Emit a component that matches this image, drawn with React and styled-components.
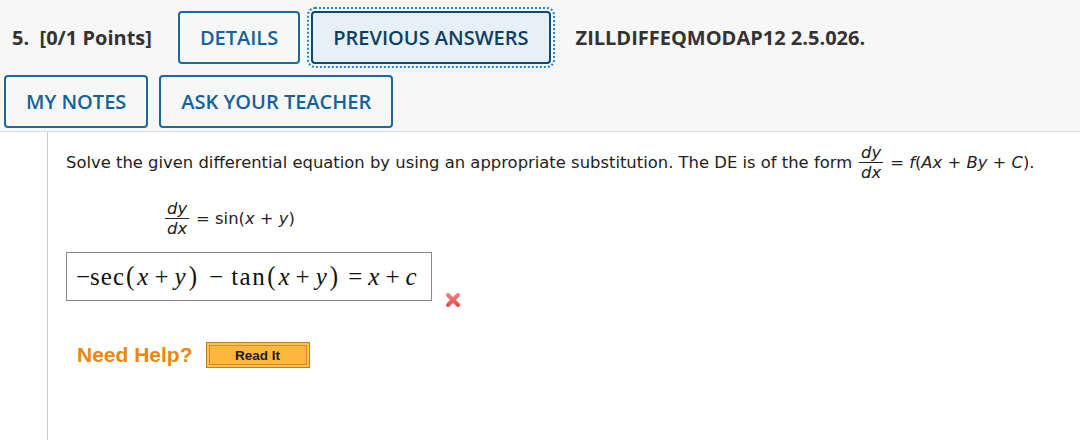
import styled, { createGlobalStyle } from 'styled-components';

const GlobalStyle = createGlobalStyle`
  html, body {
    margin: 0;
    padding: 0;
    background: #ffffff;
  }
  body {
    font-family: "Open Sans", "Liberation Sans", sans-serif;
    color: #333;
  }
`;

const Page = styled.div`
  width: 1080px;
  height: 440px;
  overflow: hidden;
  background: #fff;
`;

// Header | points, buttons, question code
const Header = styled.header`
  background: #f7f7f7;
  border-bottom: 1px solid #dddddd;
  padding: 11px 0 3px;
  display: flex;
  flex-direction: column;
  gap: 11px;
`;

const HeaderRow = styled.div`
  display: flex;
  align-items: center;
  padding-left: ${(p) => p.$indent}px;
  gap: 11px;
`;

const Heading = styled.span`
  font-weight: 700;
  font-size: 20px;
  color: #333;
  margin-right: ${(p) => p.$after || 0}px;
  margin-left: ${(p) => p.$before || 0}px;
`;

const HeadButton = styled.button`
  height: 53px;
  padding: 0 20px;
  border: 2px solid ${(p) => (p.$active ? '#0c4a72' : '#1a6a9c')};
  border-radius: 4px;
  background: ${(p) => (p.$active ? '#e8f0f7' : '#f7f7f7')};
  color: ${(p) => (p.$active ? '#0c3f63' : '#12639a')};
  font-family: "Open Sans", "Liberation Sans", sans-serif;
  font-size: 20px;
  font-weight: 600;
  outline: ${(p) => (p.$active ? '2px dotted #1c86e0' : 'none')};
  outline-offset: 2px;
  cursor: pointer;
`;

// Question body
const Body = styled.section`
  margin-left: 47px;
  border-left: 1px solid #cccccc;
  height: 320px;
  padding: 11px 0 0 18px;
  font-family: "DejaVu Sans", Verdana, sans-serif;
  font-size: 16.4px;
  color: #222;
`;

const Prompt = styled.p`
  margin: 0;
  display: flex;
  align-items: center;
  white-space: nowrap;
`;

const Frac = styled.span`
  display: inline-flex;
  flex-direction: column;
  align-items: center;
  margin: 0 7px 0 7px;
  font-style: italic;
  line-height: 19px;

  span:first-child {
    border-bottom: 1px solid #222;
    padding: 0 2px 0;
  }
`;

const Var = styled.i`
  font-style: italic;
`;

const Equation = styled.div`
  display: flex;
  align-items: center;
  margin: 17px 0 0 92px;
  white-space: nowrap;
`;

const AnswerRow = styled.div`
  display: flex;
  align-items: flex-start;
  gap: 13px;
  margin-top: 14px;
`;

const AnswerBox = styled.div`
  width: 366px;
  height: 49px;
  border: 1px solid #8a8a8a;
  box-sizing: border-box;
  display: flex;
  align-items: center;
  padding: 1px 0 0 9px;
  font-family: "Liberation Serif", "DejaVu Serif", serif;
  font-size: 25px;
  color: #111;
  white-space: nowrap;
`;

const MathVar = styled.span`
  font-style: italic;
`;

const Fn = styled.span`
  letter-spacing: ${(p) => p.$track || 0}px;
`;

const Op = styled.span`
  margin: 0 ${(p) => p.$r ?? 6}px 0 ${(p) => p.$l ?? 6}px;
`;

const Paren = styled.span`
  display: inline-block;
  transform: scaleY(1.08) translateY(-1px);
  margin: 0 ${(p) => (p.$open ? 3 : 2)}px 0 ${(p) => (p.$open ? 1 : 3)}px;
`;

const WrongMark = styled.svg`
  margin-top: 40px;
  flex: none;
`;

const HelpRow = styled.div`
  display: flex;
  align-items: center;
  gap: 13px;
  margin: 34px 0 0 11px;
`;

const HelpLabel = styled.span`
  font-family: "Liberation Sans", Arial, sans-serif;
  font-weight: 700;
  font-size: 21px;
  color: #f0850c;
`;

const ReadIt = styled.button`
  width: 104px;
  height: 26px;
  padding: 0;
  border: 1px solid #c47a1d;
  background: #fdb73a;
  box-shadow: inset 0 0 0 2px #fcc359, inset 0 0 0 3px #d48b28;
  font-family: "Liberation Sans", Arial, sans-serif;
  font-weight: 700;
  font-size: 13.5px;
  color: #1b1b1b;
  cursor: pointer;
`;

const Fraction = ({ top, bottom }) => (
  <Frac>
    <span>{top}</span>
    <span>{bottom}</span>
  </Frac>
);

const App = () => {
  return (
    <Page>
      <GlobalStyle />
      <Header>
        <HeaderRow $indent={12}>
          <Heading $after={15}>5.&nbsp; [0/1 Points]</Heading>
          <HeadButton type="button">DETAILS</HeadButton>
          <HeadButton type="button" $active>
            PREVIOUS ANSWERS
          </HeadButton>
          <Heading $before={14}>ZILLDIFFEQMODAP12 2.5.026.</Heading>
        </HeaderRow>
        <HeaderRow $indent={4}>
          <HeadButton type="button">MY NOTES</HeadButton>
          <HeadButton type="button">ASK YOUR TEACHER</HeadButton>
        </HeaderRow>
      </Header>

      <Body>
        <Prompt>
          Solve the given differential equation by using an appropriate
          substitution. The DE is of the form
          <Fraction top="dy" bottom="dx" />= <Var>&nbsp;f</Var>(<Var>Ax</Var>&nbsp;+&nbsp;
          <Var>By</Var>&nbsp;+&nbsp;<Var>C</Var>).
        </Prompt>

        <Equation>
          <Fraction top="dy" bottom="dx" />= sin(<Var>x</Var>&nbsp;+&nbsp;<Var>y</Var>)
        </Equation>

        <AnswerRow>
          <AnswerBox>
            <span>−</span>
            <Fn $track={1}>sec</Fn>
            <Paren $open>(</Paren>
            <MathVar>x</MathVar>
            <Op>+</Op>
            <MathVar>y</MathVar>
            <Paren>)</Paren>
            <Op $l={10} $r={8}>−</Op>
            <Fn $track={1.5}>tan</Fn>
            <Paren $open>(</Paren>
            <MathVar>x</MathVar>
            <Op>+</Op>
            <MathVar>y</MathVar>
            <Paren>)</Paren>
            <Op $l={8} $r={6}>=</Op>
            <MathVar>x</MathVar>
            <Op>+</Op>
            <MathVar>c</MathVar>
          </AnswerBox>
          <WrongMark width="16" height="16" viewBox="0 0 16 16">
            <defs>
              <linearGradient id="xg" x1="0" y1="0" x2="0" y2="1">
                <stop offset="0" stopColor="#f77a7a" />
                <stop offset="1" stopColor="#ea4c4f" />
              </linearGradient>
            </defs>
            <path
              d="M3 3 L13 13 M13 3 L3 13"
              stroke="url(#xg)"
              strokeWidth="4"
              strokeLinecap="round"
              fill="none"
            />
          </WrongMark>
        </AnswerRow>

        <HelpRow>
          <HelpLabel>Need Help?</HelpLabel>
          <ReadIt type="button">Read It</ReadIt>
        </HelpRow>
      </Body>
    </Page>
  );
};

export default App;
